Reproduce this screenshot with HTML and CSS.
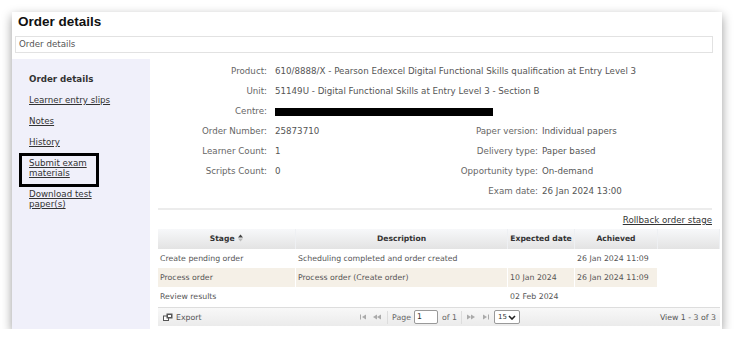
FILE: index.html
```html
<!DOCTYPE html>
<html>
<head>
<meta charset="utf-8">
<link rel="stylesheet" href="styles.css">
</head>
<body>
<div class="card">
  <h1 class="title">Order details</h1>
  <div class="crumb">Order details</div>
  <div class="body">
    <nav class="side">
      <div class="side-item current">Order details</div>
      <a class="side-item" href="#">Learner entry slips</a>
      <a class="side-item" href="#">Notes</a>
      <a class="side-item" href="#">History</a>
      <a class="side-item marked" href="#">Submit exam<br>materials</a>
      <a class="side-item" href="#">Download test<br>paper(s)</a>
    </nav>
    <main class="main">
      <div class="details">
        <div class="row"><span class="lbl">Product:</span><span class="val">610/8888/X - Pearson Edexcel Digital Functional Skills qualification at Entry Level 3</span></div>
        <div class="row"><span class="lbl">Unit:</span><span class="val">51149U - Digital Functional Skills at Entry Level 3 - Section B</span></div>
        <div class="row"><span class="lbl">Centre:</span><span class="val"><span class="redact"></span></span></div>
        <div class="row"><span class="lbl">Order Number:</span><span class="val half">25873710</span><span class="lbl2">Paper version:</span><span class="val2">Individual papers</span></div>
        <div class="row"><span class="lbl">Learner Count:</span><span class="val half">1</span><span class="lbl2">Delivery type:</span><span class="val2">Paper based</span></div>
        <div class="row"><span class="lbl">Scripts Count:</span><span class="val half">0</span><span class="lbl2">Opportunity type:</span><span class="val2">On-demand</span></div>
        <div class="row"><span class="lbl"></span><span class="val half"></span><span class="lbl2">Exam date:</span><span class="val2">26 Jan 2024 13:00</span></div>
      </div>
      <div class="divider"></div>
      <div class="actions"><a href="#">Rollback order stage</a></div>
      <div class="grid-head">
        <div class="th">Stage <svg class="sort" width="5" height="8" viewBox="0 0 5 8"><path d="M0 3.5 L2.5 0.5 L5 3.5Z" fill="#444"/><path d="M0 4.5 L2.5 7.5 L5 4.5Z" fill="#bbb"/></svg></div>
        <div class="th">Description</div>
        <div class="th">Expected date</div>
        <div class="th">Achieved</div>
        <div class="th"></div>
      </div>
      <div class="grid-row"><div class="td">Create pending order</div><div class="td">Scheduling completed and order created</div><div class="td"></div><div class="td">26 Jan 2024 11:09</div></div>
      <div class="grid-row hi"><div class="td">Process order</div><div class="td">Process order (Create order)</div><div class="td">10 Jan 2024</div><div class="td">26 Jan 2024 11:09</div></div>
      <div class="grid-row"><div class="td">Review results</div><div class="td"></div><div class="td">02 Feb 2024</div><div class="td"></div></div>
      <div class="pager">
        <div class="export">
          <svg width="10" height="8" viewBox="0 0 10 8"><rect x="0.5" y="3" width="5" height="4.5" fill="#fff" stroke="#555"/><rect x="3.5" y="0.5" width="6" height="5" fill="#555"/><rect x="5" y="2" width="3" height="2" fill="#fff"/></svg>
          <span>Export</span>
        </div>
        <div class="pages">
          <svg class="pi p-first" width="7" height="6" viewBox="0 0 7 6"><rect x="0" y="0.5" width="1" height="5" fill="#aaa"/><path d="M6 0.5 L2 3 L6 5.5Z" fill="#aaa"/></svg>
          <svg class="pi p-prev" width="8" height="6" viewBox="0 0 8 6"><path d="M4 0.5 L0 3 L4 5.5Z" fill="#aaa"/><path d="M8 0.5 L4 3 L8 5.5Z" fill="#aaa"/></svg>
          <span class="sep s1"></span>
          <span class="ptxt">Page</span>
          <span class="pinput">1</span>
          <span class="ptxt of">of 1</span>
          <span class="sep s2"></span>
          <svg class="pi p-next" width="8" height="6" viewBox="0 0 8 6"><path d="M0 0.5 L4 3 L0 5.5Z" fill="#aaa"/><path d="M4 0.5 L8 3 L4 5.5Z" fill="#aaa"/></svg>
          <svg class="pi p-last" width="7" height="6" viewBox="0 0 7 6"><path d="M1 0.5 L5 3 L1 5.5Z" fill="#aaa"/><rect x="6" y="0.5" width="1" height="5" fill="#aaa"/></svg>
          <span class="psel">15<svg width="8" height="5" viewBox="0 0 8 5"><path d="M1 1 L4 4 L7 1" fill="none" stroke="#222" stroke-width="1.6"/></svg></span>
        </div>
        <div class="view">View 1 - 3 of 3</div>
      </div>
    </main>
  </div>
</div>
</body>
</html>
```

FILE: styles.css
```css
*, *::before, *::after { box-sizing: border-box; }
body {
  margin: 0;
  background: #fff;
  font-family: "DejaVu Sans", Verdana, sans-serif;
  font-size: 8.7px;
  color: #555;
}
.card {
  margin: 12px 0 0 12px;
  width: 710px;
  height: 317px;
  background: #fff;
  box-shadow: 0 4px 10px rgba(0, 0, 0, 0.4);
  display: flex;
  flex-direction: column;
}
.title {
  margin: 0;
  padding: 2px 0 0 6px;
  font-family: "Liberation Sans", Arial, sans-serif;
  font-size: 13.5px;
  line-height: 16px;
  font-weight: bold;
  color: #111;
}
.crumb {
  margin: 6px 9px 0 3px;
  height: 17px;
  border: 1px solid #e2e2e2;
  padding-left: 3px;
  line-height: 15px;
  color: #555;
}
.body {
  margin-top: 6px;
  flex: 1;
  display: flex;
  min-height: 0;
}
.side {
  width: 138px;
  background: #f0f0fa;
  padding: 15px 0 0 17px;
  display: flex;
  flex-direction: column;
  align-items: flex-start;
  gap: 11px;
}
.side-item {
  display: block;
  line-height: 10px;
  color: #333;
  text-decoration: underline;
}
.side-item.current {
  font-weight: bold;
  text-decoration: none;
  color: #333;
}
.marked { position: relative; }
.marked::before {
  content: "";
  position: absolute;
  left: -10px;
  top: -5px;
  width: 80px;
  height: 34px;
  border: 3px solid #000;
}
.main {
  flex: 1;
  padding: 2px 2px 0 8px;
  display: flex;
  flex-direction: column;
}
.row {
  height: 20px;
  display: flex;
  align-items: center;
  white-space: nowrap;
}
.lbl {
  width: 109px;
  text-align: right;
  color: #666;
}
.val { margin-left: 8px; }
.val.half { width: 153px; }
.lbl2 {
  width: 110px;
  text-align: right;
  color: #666;
}
.val2 { margin-left: 4px; }
.redact {
  display: inline-block;
  width: 218px;
  height: 8px;
  background: #000;
  vertical-align: middle;
}
.divider {
  margin-top: 7px;
  margin-right: 8px;
  height: 2px;
  background: #ececec;
}
.actions {
  text-align: right;
  padding: 2px 8px 0 0;
  height: 19px;
  line-height: 17px;
}
.actions a { color: #333; text-decoration: underline; }
.grid-head {
  display: grid;
  grid-template-columns: 138px 212px 67px 83px 62px;
  width: 562px;
  height: 20px;
}
.th {
  background: linear-gradient(#f7f8fa, #e3e3e3);
  border-right: 1px solid #eef0f3;
  font-weight: bold;
  font-size: 7.6px;
  color: #333;
  text-align: center;
  line-height: 20px;
  white-space: nowrap;
}
.sort { vertical-align: -1px; margin-left: 1px; }
.grid-row {
  display: grid;
  grid-template-columns: 138px 212px 67px 83px;
  width: 500px;
  height: 19px;
  font-size: 7.8px;
}
.td {
  padding-left: 2px;
  line-height: 19px;
  white-space: nowrap;
  color: #555;
  border-right: 1px solid #fff;
}
.grid-row.hi .td { background: #f5f0e7; }
.pager {
  margin-top: 1px;
  width: 562px;
  height: 19px;
  background: linear-gradient(#f8f8f8, #ebebeb);
  border-top: 1px solid #ddd;
  display: grid;
  grid-template-columns: 1fr auto 1fr;
  align-items: center;
  font-size: 7.8px;
}
.export {
  display: flex;
  align-items: center;
  gap: 3px;
  padding-left: 5px;
  color: #555;
}
.pages {
  display: flex;
  align-items: center;
  color: #666;
  margin-left: 2px;
}
.p-prev { margin-left: 6px; }
.s1 { margin-left: 6px; }
.pages .ptxt { margin-left: 4px; }
.pinput { margin-left: 3px; }
.pages .of { margin-left: 4px; }
.s2 { margin-left: 4px; }
.p-next { margin-left: 5px; }
.p-last { margin-left: 7px; }
.psel { margin-left: 5px; }
.sep {
  width: 1px;
  height: 13px;
  background: #ddd;
}
.pinput {
  width: 24px;
  height: 14px;
  border: 1px solid #999;
  border-radius: 2px;
  background: #fff;
  padding-left: 2px;
  line-height: 12px;
  color: #333;
}
.psel {
  width: 26px;
  height: 14px;
  border: 1px solid #999;
  border-radius: 2px;
  background: #fff;
  display: flex;
  align-items: center;
  justify-content: space-between;
  padding: 0 3px 0 3px;
  font-size: 7px;
  color: #333;
}
.view {
  text-align: right;
  padding-right: 4px;
  color: #555;
}
```
